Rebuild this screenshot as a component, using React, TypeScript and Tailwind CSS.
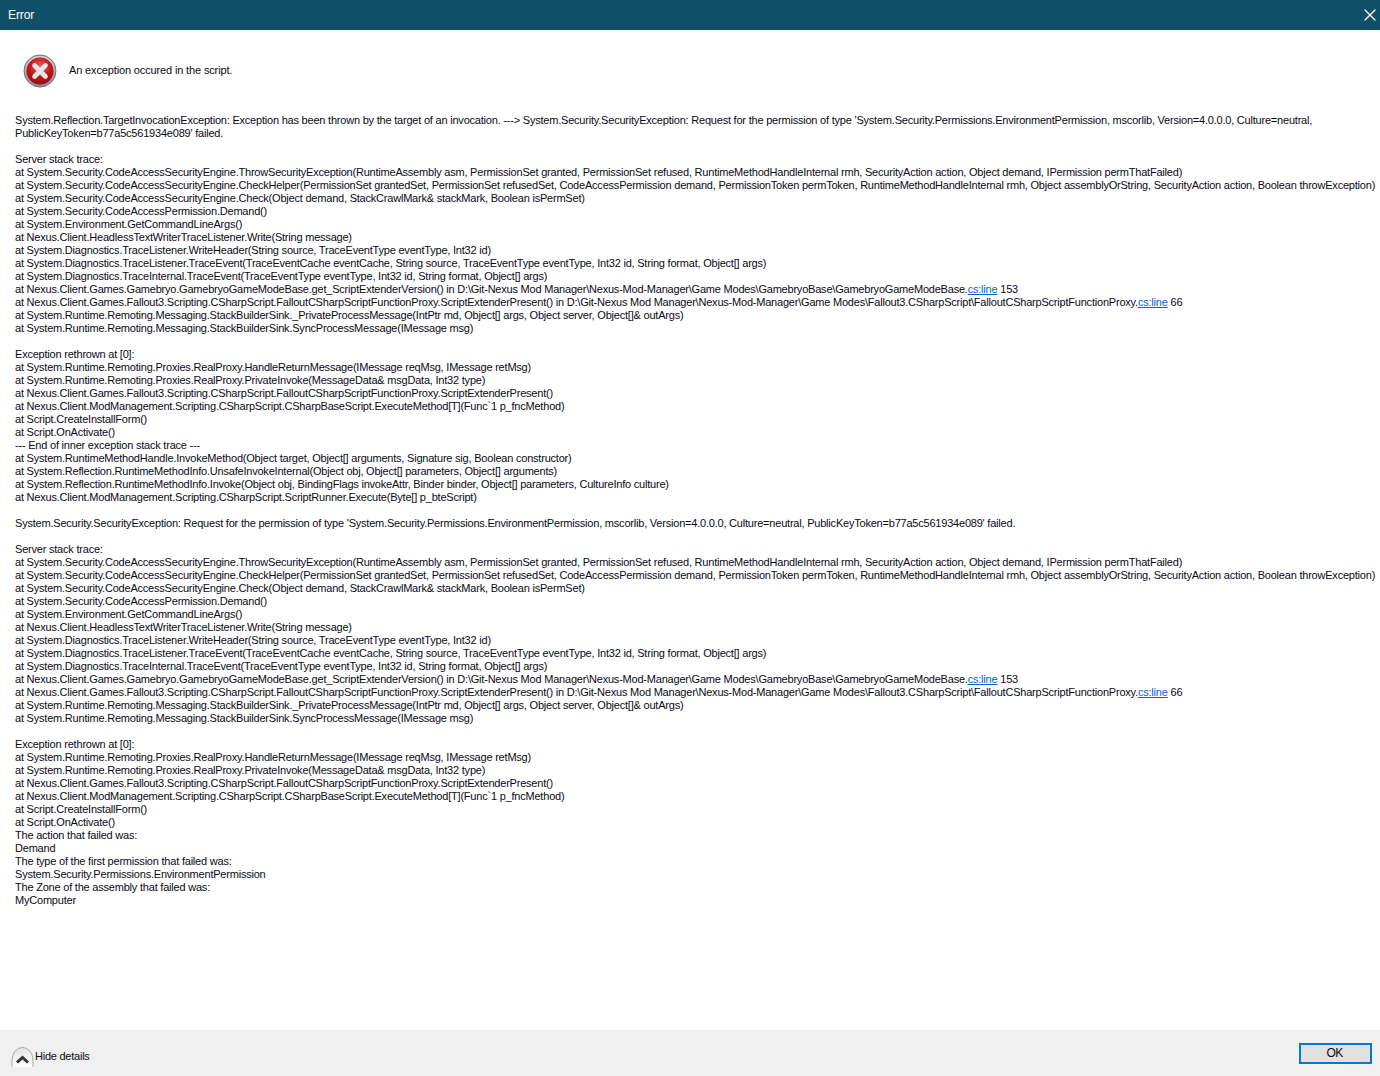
import { X } from 'lucide-react'

const stackA = [
  'at System.Security.CodeAccessSecurityEngine.ThrowSecurityException(RuntimeAssembly asm, PermissionSet granted, PermissionSet refused, RuntimeMethodHandleInternal rmh, SecurityAction action, Object demand, IPermission permThatFailed)',
  'at System.Security.CodeAccessSecurityEngine.CheckHelper(PermissionSet grantedSet, PermissionSet refusedSet, CodeAccessPermission demand, PermissionToken permToken, RuntimeMethodHandleInternal rmh, Object assemblyOrString, SecurityAction action, Boolean throwException)',
  'at System.Security.CodeAccessSecurityEngine.Check(Object demand, StackCrawlMark& stackMark, Boolean isPermSet)',
  'at System.Security.CodeAccessPermission.Demand()',
  'at System.Environment.GetCommandLineArgs()',
  'at Nexus.Client.HeadlessTextWriterTraceListener.Write(String message)',
  'at System.Diagnostics.TraceListener.WriteHeader(String source, TraceEventType eventType, Int32 id)',
  'at System.Diagnostics.TraceListener.TraceEvent(TraceEventCache eventCache, String source, TraceEventType eventType, Int32 id, String format, Object[] args)',
  'at System.Diagnostics.TraceInternal.TraceEvent(TraceEventType eventType, Int32 id, String format, Object[] args)',
  'at Nexus.Client.Games.Gamebryo.GamebryoGameModeBase.get_ScriptExtenderVersion() in D:\\Git-Nexus Mod Manager\\Nexus-Mod-Manager\\Game Modes\\GamebryoBase\\GamebryoGameModeBase.[cs:line] 153',
  'at Nexus.Client.Games.Fallout3.Scripting.CSharpScript.FalloutCSharpScriptFunctionProxy.ScriptExtenderPresent() in D:\\Git-Nexus Mod Manager\\Nexus-Mod-Manager\\Game Modes\\Fallout3.CSharpScript\\FalloutCSharpScriptFunctionProxy.[cs:line] 66',
  'at System.Runtime.Remoting.Messaging.StackBuilderSink._PrivateProcessMessage(IntPtr md, Object[] args, Object server, Object[]& outArgs)',
  'at System.Runtime.Remoting.Messaging.StackBuilderSink.SyncProcessMessage(IMessage msg)',
  '',
  'Exception rethrown at [0]:',
  'at System.Runtime.Remoting.Proxies.RealProxy.HandleReturnMessage(IMessage reqMsg, IMessage retMsg)',
  'at System.Runtime.Remoting.Proxies.RealProxy.PrivateInvoke(MessageData& msgData, Int32 type)',
  'at Nexus.Client.Games.Fallout3.Scripting.CSharpScript.FalloutCSharpScriptFunctionProxy.ScriptExtenderPresent()',
  'at Nexus.Client.ModManagement.Scripting.CSharpScript.CSharpBaseScript.ExecuteMethod[T](Func`1 p_fncMethod)',
  'at Script.CreateInstallForm()',
  'at Script.OnActivate()',
]

const lines = [
  "System.Reflection.TargetInvocationException: Exception has been thrown by the target of an invocation. ---> System.Security.SecurityException: Request for the permission of type 'System.Security.Permissions.EnvironmentPermission, mscorlib, Version=4.0.0.0, Culture=neutral,",
  "PublicKeyToken=b77a5c561934e089' failed.",
  '',
  'Server stack trace:',
  ...stackA,
  '--- End of inner exception stack trace ---',
  'at System.RuntimeMethodHandle.InvokeMethod(Object target, Object[] arguments, Signature sig, Boolean constructor)',
  'at System.Reflection.RuntimeMethodInfo.UnsafeInvokeInternal(Object obj, Object[] parameters, Object[] arguments)',
  'at System.Reflection.RuntimeMethodInfo.Invoke(Object obj, BindingFlags invokeAttr, Binder binder, Object[] parameters, CultureInfo culture)',
  'at Nexus.Client.ModManagement.Scripting.CSharpScript.ScriptRunner.Execute(Byte[] p_bteScript)',
  '',
  "System.Security.SecurityException: Request for the permission of type 'System.Security.Permissions.EnvironmentPermission, mscorlib, Version=4.0.0.0, Culture=neutral, PublicKeyToken=b77a5c561934e089' failed.",
  '',
  'Server stack trace:',
  ...stackA,
  'The action that failed was:',
  'Demand',
  'The type of the first permission that failed was:',
  'System.Security.Permissions.EnvironmentPermission',
  'The Zone of the assembly that failed was:',
  'MyComputer',
]

// [cs:line] in a line marks the link part
function TraceLine({ text }: { text: string }) {
  const m = text.match(/^(.*)\[cs:line\](.*)$/)
  if (!m) return <div className="h-[13px] whitespace-pre">{text}</div>
  return (
    <div className="h-[13px] whitespace-pre">
      {m[1]}
      <span className="text-[#0066cc] underline">cs:line</span>
      {m[2]}
    </div>
  )
}

function ErrorIcon() {
  return (
    <svg width="34" height="34" viewBox="0 0 34 34" className="shrink-0">
      <defs>
        <radialGradient id="red" cx="50%" cy="35%" r="70%">
          <stop offset="0%" stopColor="#e8666a" />
          <stop offset="55%" stopColor="#c4161c" />
          <stop offset="100%" stopColor="#8e0b10" />
        </radialGradient>
        <linearGradient id="ring" x1="0" y1="0" x2="0" y2="1">
          <stop offset="0%" stopColor="#d5d5d5" />
          <stop offset="100%" stopColor="#8a8a8a" />
        </linearGradient>
      </defs>
      <circle cx="17" cy="17" r="16" fill="url(#ring)" stroke="#6f6f6f" strokeWidth="1" />
      <circle cx="17" cy="17" r="13.5" fill="url(#red)" />
      <path d="M11.5 11.5 L22.5 22.5 M22.5 11.5 L11.5 22.5" stroke="#e6e6e6" strokeWidth="4.6" strokeLinecap="round" />
    </svg>
  )
}

function CollapseIcon() {
  return (
    <svg width="24" height="20" viewBox="0 0 24 20" className="shrink-0">
      <defs>
        <linearGradient id="cap" x1="0" y1="0" x2="0" y2="1">
          <stop offset="0%" stopColor="#e2e2e2" />
          <stop offset="100%" stopColor="#ffffff" />
        </linearGradient>
      </defs>
      <path d="M1 20 V13 A10.5 12.5 0 0 1 22 13 V20 Z" fill="url(#cap)" />
      <path d="M1 20 V13 A10.5 12.5 0 0 1 22 13 V20" fill="none" stroke="#a8a8a8" strokeWidth="1" />
      <path d="M6 15.5 L11.5 10.5 L17 15.5" fill="none" stroke="#333333" strokeWidth="3" />
    </svg>
  )
}

export default function App() {
  return (
    <div className="h-[1076px] flex flex-col bg-white text-[11px] leading-[13px] tracking-[-0.21px] text-[#0a0a14] font-['Liberation_Sans',sans-serif]">
      <div className="h-[30px] shrink-0 flex items-center justify-between pl-[8px] bg-[#104f68] text-white">
        <span className="text-[12px] tracking-[-0.1px]">Error</span>
        <X size={20} strokeWidth={1.6} className="-mt-[1px]" />
      </div>

      <div className="flex items-center gap-[12px] pl-[23px] pt-[24px] pb-[26px]">
        <ErrorIcon />
        <span className="-mt-[2px] tracking-[-0.14px]">An exception occured in the script.</span>
      </div>

      <div className="flex-1 pl-[15px] overflow-hidden">
        {lines.map((l, i) => (
          <TraceLine key={i} text={l} />
        ))}
      </div>

      <div className="h-[46px] shrink-0 flex justify-between bg-[#f0f0f0] pl-[11px] pr-[8px]">
        <div className="flex items-start pt-[17px]">
          <CollapseIcon />
          <span className="mt-[3px] tracking-[-0.24px]">Hide details</span>
        </div>
        <button className="mt-[13px] w-[73px] h-[21px] border-2 border-[#0078d7] bg-[#e1e1e1] text-center text-[12px] leading-[15px] tracking-[-0.6px] pr-[2px]">OK</button>
      </div>
    </div>
  )
}
